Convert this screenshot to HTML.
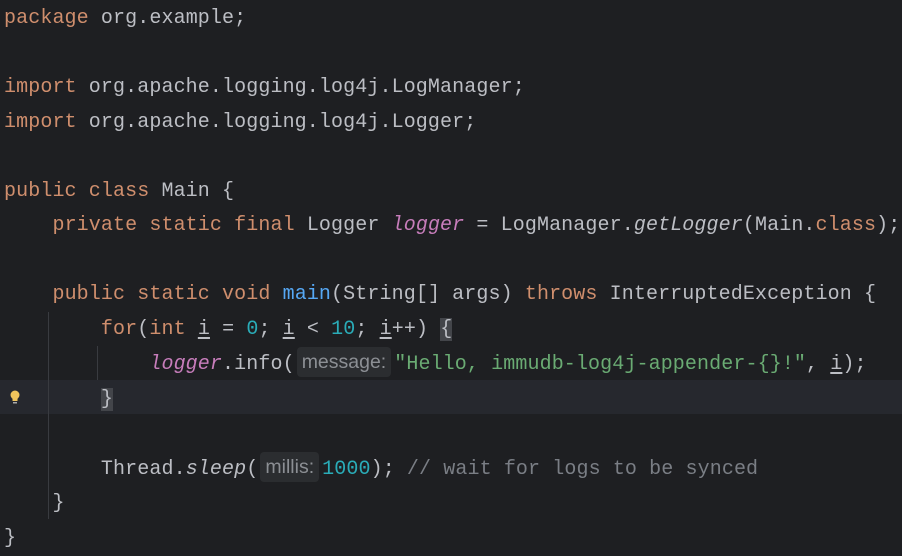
<!DOCTYPE html>
<html><head><meta charset="utf-8"><style>
html,body{margin:0;padding:0;background:#1e1f22;width:902px;height:552px;overflow:hidden}
.code{position:absolute;left:4px;top:2px;font-family:"Liberation Mono",monospace;font-size:20px;line-height:34.5px;color:#bcbec4;white-space:pre;letter-spacing:0.11px}
.k{color:#cf8e6d}.s{color:#6aab73}.n{color:#2aacb8}.c{color:#7a7e85}.f{color:#c77dbb;font-style:italic}.m{color:#56a8f5}.i{font-style:italic}
.u{text-decoration:underline;text-underline-offset:3px}
.h{display:inline-block;background:#2b2d30;color:#8c8f94;font-family:"Liberation Sans",sans-serif;font-size:19.5px;line-height:30px;padding:0 5px;border-radius:4px;vertical-align:1px;margin:0 3px 0 2px;letter-spacing:0}
.cur{position:absolute;left:0;top:380px;width:902px;height:34px;background:#26282e}
.g{position:absolute;width:1px;background:#393b40}
.br{background:#43454a}
</style></head><body>
<div class="cur"></div>
<div class="g" style="left:48px;top:312px;height:207px"></div>
<div class="g" style="left:97px;top:346px;height:34px"></div>
<svg style="position:absolute;left:9px;top:389px" width="12" height="16" viewBox="0 0 12 16"><circle cx="6" cy="6" r="4.5" fill="#f2c55c"/><rect x="3.5" y="9" width="5" height="3" fill="#f2c55c"/><rect x="4" y="13" width="4" height="1.5" fill="#aaa"/></svg>
<div class="code"><span class="k">package</span> org.example;

<span class="k">import</span> org.apache.logging.log4j.LogManager;
<span class="k">import</span> org.apache.logging.log4j.Logger;

<span class="k">public class</span> Main {
    <span class="k">private static final</span> Logger <span class="f">logger</span> = LogManager.<span class="i">getLogger</span>(Main.<span class="k">class</span>);

    <span class="k">public static void</span> <span class="m">main</span>(String[] args) <span class="k">throws</span> InterruptedException {
        <span class="k">for</span>(<span class="k">int</span> <span class="u">i</span> = <span class="n">0</span>; <span class="u">i</span> &lt; <span class="n">10</span>; <span class="u">i</span>++) <span class="br">{</span>
            <span class="f">logger</span>.info(<span class="h">message:</span><span class="s">"Hello, immudb-log4j-appender-{}!"</span>, <span class="u">i</span>);
        <span class="br">}</span>

        Thread.<span class="i">sleep</span>(<span class="h">millis:</span><span class="n">1000</span>); <span class="c">// wait for logs to be synced</span>
    }
}</div>
</body></html>
